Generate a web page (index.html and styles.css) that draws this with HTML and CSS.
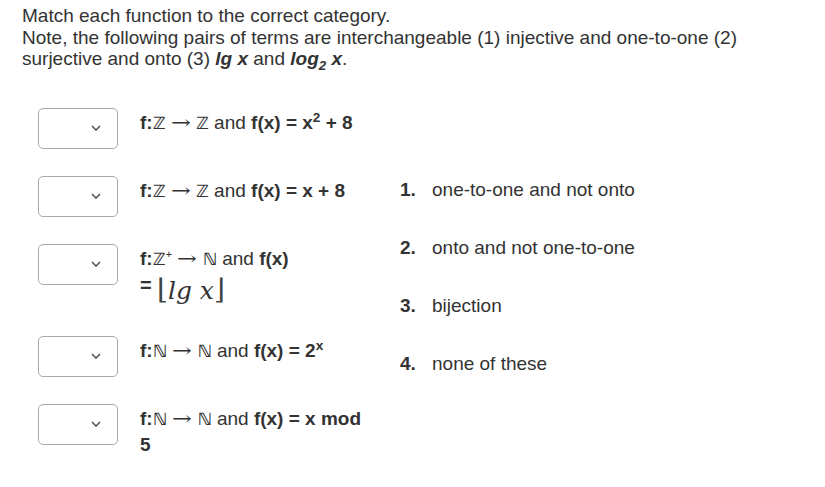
FILE: index.html
```html
<!DOCTYPE html>
<html lang="en">
<head>
    <meta charset="UTF-8">
    <title>Match each function</title>
    <link rel="stylesheet" href="styles.css">
</head>
<body>
    <div class="question">
        <p class="prompt">
            Match each function to the correct category.<br>
            Note, the following pairs of terms are interchangeable (1) injective and one-to-one (2)
            surjective and onto (3) <b><i>lg x</i></b> and <b><i>log<sub>2</sub> x</i></b>.
        </p>

        <div class="match">
            <!-- left side: one dropdown per function -->
            <div class="items">
                <div class="item">
                    <span class="drop"><svg width="10" height="6" viewBox="0 0 10 6"><path d="M1 1l4 4 4-4" fill="none" stroke="#555" stroke-width="1.6"/></svg></span>
                    <div class="fn"><b>f:</b><span class="bb">ℤ</span> <span class="arr">→</span> <span class="bb">ℤ</span> and <b>f(x) = x<sup>2</sup> + 8</b></div>
                </div>
                <div class="item">
                    <span class="drop"><svg width="10" height="6" viewBox="0 0 10 6"><path d="M1 1l4 4 4-4" fill="none" stroke="#555" stroke-width="1.6"/></svg></span>
                    <div class="fn"><b>f:</b><span class="bb">ℤ</span> <span class="arr">→</span> <span class="bb">ℤ</span> and <b>f(x) = x + 8</b></div>
                </div>
                <div class="item">
                    <span class="drop"><svg width="10" height="6" viewBox="0 0 10 6"><path d="M1 1l4 4 4-4" fill="none" stroke="#555" stroke-width="1.6"/></svg></span>
                    <div class="fn"><b>f:</b><span class="bb">ℤ</span><sup class="plus">+</sup> <span class="arr">→</span> <span class="bb">ℕ</span> and <b>f(x)</b><br>
                        <b class="eq">=</b> <span class="math"><span class="fl">⌊</span>lg x<span class="fl">⌋</span></span></div>
                </div>
                <div class="item">
                    <span class="drop"><svg width="10" height="6" viewBox="0 0 10 6"><path d="M1 1l4 4 4-4" fill="none" stroke="#555" stroke-width="1.6"/></svg></span>
                    <div class="fn"><b>f:</b><span class="bb">ℕ</span> <span class="arr">→</span> <span class="bb">ℕ</span> and <b>f(x) = 2<sup>x</sup></b></div>
                </div>
                <div class="item">
                    <span class="drop"><svg width="10" height="6" viewBox="0 0 10 6"><path d="M1 1l4 4 4-4" fill="none" stroke="#555" stroke-width="1.6"/></svg></span>
                    <div class="fn"><b>f:</b><span class="bb">ℕ</span> <span class="arr">→</span> <span class="bb">ℕ</span> and <b>f(x) = x mod 5</b></div>
                </div>
            </div>

            <!-- right side: the categories -->
            <ol class="choices">
                <li><span class="num">1.</span>one-to-one and not onto</li>
                <li><span class="num">2.</span>onto and not one-to-one</li>
                <li><span class="num">3.</span>bijection</li>
                <li><span class="num">4.</span>none of these</li>
            </ol>
        </div>
    </div>
</body>
</html>
```

FILE: styles.css
```css
body {
    margin: 0;
    background: #fff;
    color: #333;
    font-family: "Liberation Sans", Arial, sans-serif;
    font-size: 19px;
}

.question {
    padding: 5px 22px;
}

.prompt {
    margin: 0;
    max-width: 730px;
    line-height: 21.5px;
}

.prompt sub {
    font-size: 70%;
    line-height: 0;
}

.match {
    display: flex;
    margin-top: 38px;
    padding-left: 16px;
}

.items {
    display: flex;
    flex-direction: column;
    gap: 27px;
    width: 362px;
}

.item {
    display: flex;
    align-items: flex-start;
    gap: 22px;
}

/* dropdown box */
.drop {
    flex: none;
    width: 62px;
    height: 39px;
    padding-right: 16px;
    border: 1px solid #aaa;
    border-radius: 5px;
    display: flex;
    align-items: center;
    justify-content: flex-end;
}

.fn {
    width: 228px;
    line-height: 26px;
    padding-top: 1px;
}

.fn sup {
    font-size: 72%;
    line-height: 0;
}

.fn .plus {
    font-size: 60%;
}

.bb {
    font-family: "DejaVu Sans", sans-serif;
    font-weight: bold;
    font-size: 17px;
}

.arr {
    font-family: "DejaVu Serif", serif;
    font-size: 19px;
    display: inline-block;
    transform: scaleX(1.25);
    margin: 0 2px;
}

.eq {
    font-size: 20px;
}

/* floor of lg x */
.math {
    display: inline-block;
    font-family: "DejaVu Serif", serif;
    font-style: italic;
    font-size: 25px;
    line-height: 36px;
    vertical-align: top;
}

.math .fl {
    font-style: normal;
    font-size: 28px;
    font-weight: 300;
    color: #444;
}

.choices {
    list-style: none;
    margin: 71px 0 0;
    padding: 0;
    font-size: 19px;
}

.choices li {
    height: 58px;
    line-height: 22px;
}

.num {
    display: inline-block;
    width: 32px;
    font-weight: bold;
    color: #333;
}
```
